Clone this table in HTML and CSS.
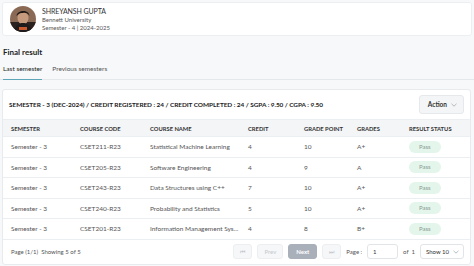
FILE: index.html
```html
<!DOCTYPE html>
<html>
<head>
<meta charset="utf-8">
<link rel="stylesheet" href="styles.css">
</head>
<body>
<div class="page">
  <div class="profile">
    <div class="avatar">
      <svg width="26" height="26" viewBox="0 0 26 26">
        <defs><clipPath id="c"><circle cx="13" cy="13" r="13"/></clipPath></defs>
        <g clip-path="url(#c)">
          <rect width="26" height="26" fill="#8a6a55"/>
          <rect y="16" width="26" height="10" fill="#2b2220"/>
          <ellipse cx="13" cy="12" rx="5.5" ry="6.5" fill="#c69a7d"/>
          <path d="M6.5 10 C7 4 19 3 19.5 10 C18 7 15 6.5 13 7 C10 6.5 8 8 6.5 10Z" fill="#1f1714"/>
          <path d="M4 26 C5 19 9 17 13 17 C17 17 21 19 22 26Z" fill="#1e1b1d"/>
          <rect x="9" y="21" width="8" height="3" fill="#c65a2e"/>
        </g>
      </svg>
    </div>
    <div class="pinfo">
      <div class="pname">SHREYANSH GUPTA</div>
      <div class="psub">Bennett University</div>
      <div class="psub">Semester - 4 | 2024-2025</div>
    </div>
  </div>

  <div class="title">Final result</div>

  <div class="tabs">
    <div class="tab active">Last semester</div>
    <div class="tab">Previous semesters</div>
  </div>

  <div class="card">
    <div class="card-head">
      <div class="summary">SEMESTER - 3 (DEC-2024) / CREDIT REGISTERED : 24 / CREDIT COMPLETED : 24 / SGPA : 9.50 / CGPA : 9.50</div>
      <button class="action">Action <svg width="6" height="4" viewBox="0 0 6 4"><path d="M0.5 0.8 L3 3.2 L5.5 0.8" fill="none" stroke="#9aa0a6" stroke-width="0.7"/></svg></button>
    </div>
    <table class="grid">
      <thead>
        <tr><th class="c1">SEMESTER</th><th class="c2">COURSE CODE</th><th class="c3">COURSE NAME</th><th class="c4">CREDIT</th><th class="c5">GRADE POINT</th><th class="c6">GRADES</th><th class="c7">RESULT STATUS</th></tr>
      </thead>
      <tbody>
        <tr><td>Semester - 3</td><td>CSET211-R23</td><td>Statistical Machine Learning</td><td>4</td><td>10</td><td>A+</td><td><span class="pill">Pass</span></td></tr>
        <tr><td>Semester - 3</td><td>CSET205-R23</td><td>Software Engineering</td><td>4</td><td>9</td><td>A</td><td><span class="pill">Pass</span></td></tr>
        <tr><td>Semester - 3</td><td>CSET243-R23</td><td>Data Structures using C++</td><td>7</td><td>10</td><td>A+</td><td><span class="pill">Pass</span></td></tr>
        <tr><td>Semester - 3</td><td>CSET240-R23</td><td>Probability and Statistics</td><td>5</td><td>10</td><td>A+</td><td><span class="pill">Pass</span></td></tr>
        <tr><td>Semester - 3</td><td>CSET201-R23</td><td>Information Management Sys...</td><td>4</td><td>8</td><td>B+</td><td><span class="pill">Pass</span></td></tr>
      </tbody>
    </table>
    <div class="pager">
      <div class="count">Page (1/1)&nbsp; Showing 5 of 5</div>
      <div class="controls">
        <button class="pb">⏮</button>
        <button class="pb">Prev</button>
        <button class="pb next">Next</button>
        <button class="pb">⏭</button>
        <span class="lbl">Page :</span>
        <span class="pinput">1</span>
        <span class="lbl">of&nbsp; 1</span>
        <span class="show">Show 10 <svg width="6" height="4" viewBox="0 0 6 4"><path d="M0.5 0.8 L3 3.2 L5.5 0.8" fill="none" stroke="#9aa0a6" stroke-width="0.7"/></svg></span>
      </div>
    </div>
  </div>
</div>
</body>
</html>
```

FILE: styles.css
```css
* { box-sizing: border-box; }
html, body { margin: 0; padding: 0; }
body {
  background: #f6f8f9;
  font-family: Lato, "Open Sans", sans-serif;
  color: #3a3f45;
  width: 474px;
  height: 266px;
  overflow: hidden;
}
.page { padding: 2px 2px 0 2px; }
.profile {
  display: flex;
  align-items: center;
  background: #fff;
  border: 1px solid #eceff1;
  border-radius: 3px;
  height: 34px;
  padding-left: 7px;
  width: 470px;
}
.avatar { width: 26px; height: 26px; margin-right: 6px; }
.avatar svg { display: block; }
.pinfo { display: flex; flex-direction: column; gap: 0px; }
.pname { font-size: 7px; color: #333; line-height: 9px; letter-spacing: -0.1px; }
.psub { font-size: 6px; color: #555; line-height: 8px; }
.title {
  font-size: 8px;
  font-weight: 700;
  color: #222;
  margin: 11px 0 0 1px;
  line-height: 10px;
}
.tabs {
  display: flex;
  border-bottom: 1px solid #e4e8ea;
  margin-top: 4px;
  margin-left: -2px;
  margin-right: -2px;
  padding-left: 3px;
}
.tab {
  font-size: 6.5px;
  color: #555;
  padding: 3px 0 6px 0;
  margin-right: 10px;
  line-height: 9px;
}
.tab.active {
  color: #222;
  border-bottom: 1.5px solid #5fa5b8;
  margin-bottom: -1px;
}
.card {
  background: #fff;
  border: 1px solid #e8ebed;
  border-radius: 3px;
  margin-top: 9px;
  width: 469px;
}
.card-head {
  display: flex;
  align-items: center;
  justify-content: space-between;
  padding: 4px 6px 4px 6px;
  height: 29px;
}
.summary {
  font-size: 6.45px;
  font-weight: 700;
  color: #222;
  letter-spacing: -0.05px;
}
.action {
  font-family: Lato, sans-serif;
  font-size: 6.5px;
  font-weight: 700;
  color: #333;
  background: #f3f5f7;
  border: 1px solid #e6e9ec;
  border-radius: 3px;
  height: 19px;
  padding: 0 6px 0 8px;
  display: flex;
  align-items: center;
  gap: 4px;
}
.grid { width: 100%; border-collapse: collapse; table-layout: fixed; }
.grid th {
  background: #f3f5f7;
  font-size: 5.8px;
  font-weight: 700;
  color: #333;
  text-align: left;
  height: 17px;
  padding: 0 0 0 8px;
  white-space: nowrap;
  border-top: 1px solid #eceff1;
  border-bottom: 1px solid #eceff1;
}
.grid td {
  font-size: 6.5px;
  color: #555;
  height: 20.5px;
  padding: 0 0 0 8px;
  border-bottom: 1px solid #eceff1;
  white-space: nowrap;
}
.c1 { width: 69px; }
.c2 { width: 70px; }
.c3 { width: 98px; }
.c4 { width: 56px; }
.c5 { width: 53px; }
.c6 { width: 52px; }
.pill {
  display: inline-block;
  background: #e4f6ec;
  color: #8a9a90;
  font-size: 6px;
  border-radius: 6px;
  padding: 2px 10px;
  line-height: 8px;
}
.pager {
  display: flex;
  align-items: center;
  justify-content: space-between;
  padding: 0 6px 0 8px;
  height: 24px;
}
.count { font-size: 6px; color: #555; }
.controls { display: flex; align-items: center; gap: 5px; }
.pb {
  font-family: Lato, sans-serif;
  font-size: 6px;
  color: #c4c8cc;
  background: #f6f7f9;
  border: 1px solid #eceef0;
  border-radius: 3px;
  height: 15px;
  padding: 0 6px;
}
.pb.next { background: #a9b0ba; color: #fff; border-color: #a9b0ba; font-weight: 700; padding: 0 7px; }
.lbl { font-size: 6px; color: #555; }
.pinput {
  display: inline-flex; align-items: center;
  width: 31px; height: 15px;
  border: 1px solid #e2e5e8; border-radius: 3px;
  font-size: 6px; color: #333; padding-left: 5px;
}
.show {
  display: inline-flex; align-items: center; gap: 4px;
  height: 15px; border: 1px solid #e2e5e8; border-radius: 3px;
  font-size: 6px; color: #333; padding: 0 4px 0 5px;
}
```
